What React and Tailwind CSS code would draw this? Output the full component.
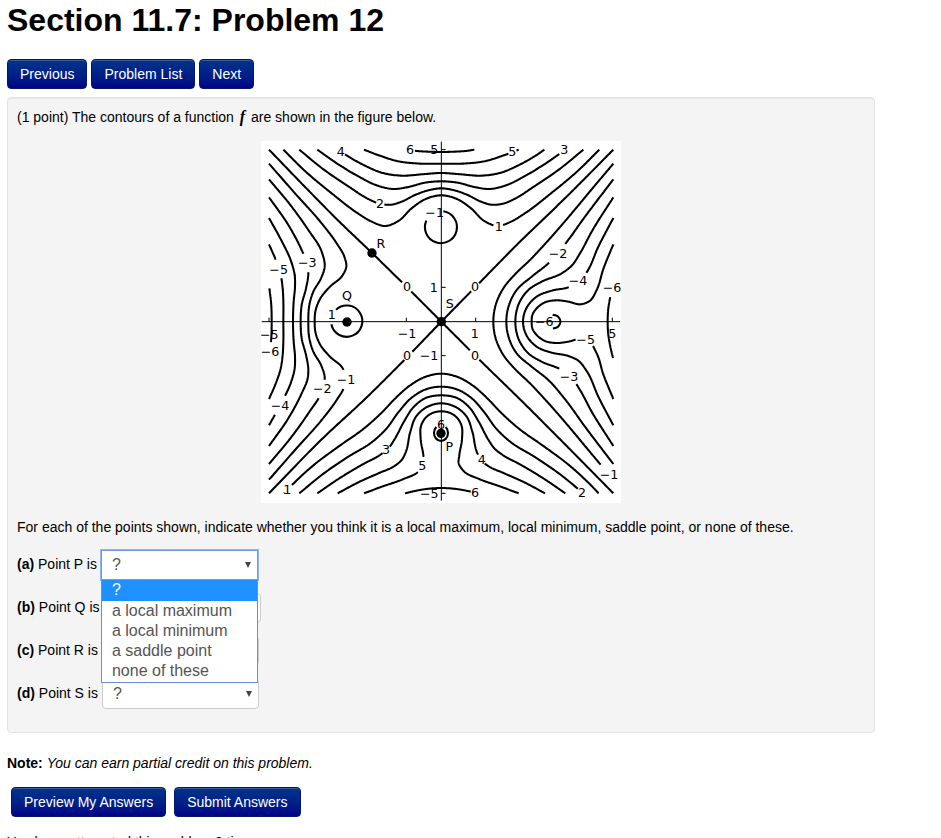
import React from 'react';

const AXIS_X = 559;
const AXIS_Y = 560;

// Each contour lists control points up to the axis it is symmetric about,
// the mirror direction, and the circular gaps left open for its label.
const contours = [
  // top
  { m: 'x', p: [[85,44],[150,108],[230,175],[310,236],[350,260],[391,273],[430,258],[470,220],[510,193],[559,181]], g: [[730,273,14]] },
  { m: 'x', p: [[133,44],[200,99],[280,154],[340,192],[370,205],[410,209],[440,200],[480,180],[520,166],[559,160]], g: [[375,207,12]] },
  { m: 'x', p: [[187,44],[250,88],[310,124],[360,149],[415,162],[460,156],[510,143],[559,139]], g: [[928,45,17]] },
  { m: 'x', p: [[250,44],[270,58],[330,92],[380,113],[440,122],[500,118],[559,114]], g: [[257,50,15]] },
  { m: 'x', p: [[327,44],[380,64],[430,79],[480,85],[559,86]], g: [[772,50,11]] },
  { m: 'x', p: [[460,44],[478,47],[520,50],[559,51]], g: [[465,45,14]] },
  // left
  { m: 'y', p: [[42,86],[120,175],[200,265],[245,325],[268,365],[274,395],[262,422],[225,455],[195,492],[181,530],[179,560]], g: [[270,733,28]] },
  { m: 'y', p: [[42,133],[110,215],[160,285],[200,350],[209,395],[198,430],[175,470],[163,510],[160,560]], g: [[200,762,29]] },
  { m: 'y', p: [[42,187],[100,270],[140,345],[158,390],[160,415],[153,460],[140,510],[137,560]], g: [[155,384,28]] },
  { m: 'y', p: [[42,249],[80,318],[108,378],[119,420],[120,455],[116,500],[114,560]], g: [[76,811,30]] },
  { m: 'y', p: [[42,328],[62,374],[76,415],[83,460],[85,500],[85,560]], g: [[70,402,29]] },
  { m: 'y', p: [[43,460],[48,500],[50,560]], g: [[45,651,28]] },
  // right
  { m: 'y', p: [[1075,86],[1010,163],[940,247],[870,327],[825,375],[780,418],[745,460],[722,510],[715,560]], g: [[1060,1020,37]] },
  { m: 'y', p: [[1075,133],[990,245],[928,330],[880,385],[830,425],[785,465],[762,510],[754,560]], g: [[908,357,34]] },
  { m: 'y', p: [[1075,187],[1010,290],[975,355],[950,392],[920,415],[860,440],[820,465],[792,505],[781,560]], g: [[940,723,33]] },
  { m: 'y', p: [[1075,249],[1030,335],[995,412],[970,443],[940,457],[890,467],[845,485],[815,518],[804,560]], g: [[970,438,34]] },
  { m: 'y', p: [[1075,328],[1045,402],[1025,465],[1005,497],[977,508],[940,500],[905,496],[870,502],[845,520],[832,540],[830,560]], g: [[990,618,28]] },
  { m: 'y', p: [[1074,451],[1066,485],[1060,520],[1058,560]], g: [[1070,459,27]] },
  // bottom
  { m: 'x', p: [[87,1075],[108,1053],[180,987],[250,935],[330,878],[380,833],[420,791],[460,755],[510,726],[559,716]], g: [[99,1062,15]] },
  { m: 'x', p: [[133,1075],[200,1020],[280,965],[350,922],[395,880],[430,832],[470,788],[510,764],[559,755]], g: [[981,1073,17]] },
  { m: 'x', p: [[187,1075],[250,1032],[325,987],[375,960],[400,940],[418,914],[448,858],[475,817],[510,790],[559,781]], g: [[393,945,14]] },
  { m: 'x', p: [[248,1075],[310,1042],[370,1015],[420,992],[440,975],[452,952],[466,890],[483,845],[514,817],[559,805]], g: [[680,972,16]] },
  { m: 'x', p: [[327,1075],[378,1056],[448,1031],[490,1010],[507,984],[505,960],[497,912],[499,870],[515,845],[535,833],[559,829]], g: [[500,990,24]] },
  { m: 'x', p: [[450,1075],[500,1064],[559,1059]], g: [[660,1074,13]] },
  // zero level and the closed rings
  { p: [[42,44],[160,166],[250,257],[351,354],[445,446],[559,560],[673,674],[790,788],[940,938],[1075,1075]], g: [[456,456,16],[660,661,16]] },
  { p: [[1075,44],[940,180],[790,325],[672,445],[559,560],[443,680],[330,792],[200,913],[42,1075]], g: [[660,456,16],[456,661,16]] },
  { p: [[893,539],[908,544],[916,560],[909,575],[894,581]], g: [] },
];

const labels = [
  ['5',538,45],['1',536,457],['−1',522,662],['−5',523,1075],
  ['−5',43,598],['−1',456,597],['1',659,597],['5',1072,597],
  ['4',257,50],['6',465,45],['5',772,50],['3',928,45],['2',375,207],['1',731,275],['−1',539,233],
  ['−5',71,405],['−3',157,384],['−6',45,651],['−4',75,813],['−2',202,762],['−1',273,735],['1',230,539],
  ['−2',909,357],['−4',969,438],['−6',1071,459],['−6',868,560],['−5',992,615],['−3',942,726],['−1',1062,1020],
  ['1',97,1063],['3',393,945],['5',502,993],['6',558,868],['4',680,973],['2',981,1073],['6',660,1074],
  ['0',456,456],['0',660,456],['0',456,662],['0',660,662],
  ['R',378,327],['Q',276,483],['S',584,507],['P',583,936],
];

// Hermite spline whose tangents are weighted by chord length, so unevenly
// spaced control points still give a smooth line.
function spline(points) {
  const n = points.length;
  const dist = (a, b) => Math.hypot(b[0] - a[0], b[1] - a[1]);
  const tangents = points.map((p, i) => {
    const a = points[Math.max(i - 1, 0)];
    const b = points[Math.min(i + 1, n - 1)];
    const before = dist(a, p);
    const after = dist(p, b);
    return [0, 1].map((k) => {
      if (!before) return (b[k] - p[k]) / after;
      if (!after) return (p[k] - a[k]) / before;
      return (((p[k] - a[k]) / before) * after + ((b[k] - p[k]) / after) * before) / (before + after);
    });
  });
  const out = [];
  for (let i = 0; i < n - 1; i++) {
    const h = dist(points[i], points[i + 1]);
    for (let s = 0; s < 24; s++) {
      const t = s / 24;
      const t2 = t * t;
      const t3 = t2 * t;
      out.push(
        [0, 1].map(
          (k) =>
            (2 * t3 - 3 * t2 + 1) * points[i][k] +
            (t3 - 2 * t2 + t) * h * tangents[i][k] +
            (3 * t2 - 2 * t3) * points[i + 1][k] +
            (t3 - t2) * h * tangents[i + 1][k]
        )
      );
    }
  }
  out.push(points[n - 1]);
  return out;
}

function contourPath({ p, m, g }) {
  const rest = p.slice(0, -1).reverse();
  let all = p;
  if (m === 'x') all = p.concat(rest.map(([x, y]) => [2 * AXIS_X - x, y]));
  if (m === 'y') all = p.concat(rest.map(([x, y]) => [x, 2 * AXIS_Y - y]));
  let open = false;
  return spline(all)
    .map(([x, y]) => {
      if (g.some(([gx, gy, r]) => Math.hypot(x - gx, y - gy) < r)) {
        open = false;
        return '';
      }
      const cmd = open ? 'L' : 'M';
      open = true;
      return `${cmd}${x.toFixed(1)} ${y.toFixed(1)}`;
    })
    .join('');
}

function ContourPlot() {
  return (
    <svg viewBox="18 18 1080 1086" className="h-[362px] w-[360px] bg-white" role="img" aria-label="Contour plot of f">
      <g fill="none" stroke="#000" strokeWidth="6.2">
        {contours.map((c, i) => (
          <path key={i} d={contourPath(c)} strokeLinejoin="round" />
        ))}
        <path d="M514 257A48 48 0 1 0 565 229" />
        <path d="M243 524A47 47 0 1 1 229 568" />
        <path d="M544 876A21 24 0 1 0 572 876" />
      </g>
      <path
        d="M20 560H1095M559 20V1097M42 560v-12M454 560v-12M662 560v-12M1072 560v-12M559 44h13M559 457h13M559 662h13M559 1075h13"
        stroke="#000"
        strokeWidth="3"
        fill="none"
      />
      <circle cx="351" cy="354" r="14" />
      <circle cx="276" cy="561" r="14" />
      <circle cx="559" cy="560" r="14" />
      <circle cx="558" cy="895" r="14" />
      <g fontSize="38" textAnchor="middle" className="font-['DejaVu_Sans',sans-serif]">
        {labels.map(([t, x, y], i) => (
          <text key={i} x={x} y={y + 13}>{t}</text>
        ))}
      </g>
    </svg>
  );
}

function BlueButton({ children }) {
  return (
    <button
      type="button"
      className="h-[30px] rounded border border-[#001a66] bg-linear-to-b from-[#003388] to-[#000088] px-3 text-sm leading-5 text-white shadow-[inset_0_1px_0_rgba(255,255,255,0.2)]"
    >
      {children}
    </button>
  );
}

const choices = ['?', 'a local maximum', 'a local minimum', 'a saddle point', 'none of these'];

function AnswerRow({ letter, point, open }) {
  const id = `answer-${letter}`;
  return (
    <div className="flex h-[30px] items-center">
      <label htmlFor={id} className="mr-1 pb-0.5">
        <b>({letter})</b> Point {point} is
      </label>
      <div className="relative">
        <select
          id={id}
          defaultValue="?"
          className={
            'block h-[30px] w-[157px] appearance-none border bg-white px-[10px] text-base leading-5 text-[#555] outline-none ' +
            (open ? 'border-[#6f9ae0] shadow-[0_0_0_1px_#8fb4f0]' : 'rounded border-[#ccc]')
          }
        >
          {choices.map((c) => (
            <option key={c}>{c}</option>
          ))}
        </select>
        <svg viewBox="0 0 6 6" className="pointer-events-none absolute top-3 right-[7px] size-[6px]" aria-hidden="true">
          <path d="M0 0h6L3 6z" fill="#444" />
        </svg>
        {open && (
          <ul
            role="listbox"
            className="absolute top-full left-0 z-10 w-full border border-t-0 border-[#6b8fd0] bg-white pb-px text-base leading-5 text-[#555]"
          >
            {choices.map((c, i) => (
              <li
                key={c}
                role="option"
                aria-selected={i === 0}
                className={i === 0 ? 'h-[21px] bg-[#1e90ff] px-[10px] leading-[19px] text-white' : 'px-[10px] pb-px leading-[19px]'}
              >
                {c}
              </li>
            ))}
          </ul>
        )}
      </div>
    </div>
  );
}

export default function App() {
  return (
    <main className="h-screen overflow-hidden bg-white pr-[66px] pl-[7px] font-['Liberation_Sans',Arial,sans-serif] text-sm leading-5 text-black">
      <h1 className="text-[32px] leading-10 font-bold">Section 11.7: Problem 12</h1>
      <nav className="mt-[19px] flex gap-1">
        <BlueButton>Previous</BlueButton>
        <BlueButton>Problem List</BlueButton>
        <BlueButton>Next</BlueButton>
      </nav>
      <section className="mt-2 rounded border border-[#e3e3e3] bg-[#f4f4f4] px-[9px] pt-[9px] pb-[23px] shadow-[inset_0_1px_1px_rgba(0,0,0,0.05)]">
        <p>
          (1 point) The contours of a function{' '}
          <i className="mx-0.5 font-['Liberation_Serif',serif] text-base leading-5 font-bold">f</i>{' '}
          are shown in the figure below.
        </p>
        <div className="mt-[14px] flex justify-center">
          <ContourPlot />
        </div>
        <p className="mt-[14px]">
          For each of the points shown, indicate whether you think it is a local maximum, local minimum, saddle point, or none of these.
        </p>
        <div className="mt-[13px] flex flex-col gap-[13px]">
          <AnswerRow letter="a" point="P" open />
          <AnswerRow letter="b" point="Q" />
          <AnswerRow letter="c" point="R" />
          <AnswerRow letter="d" point="S" />
        </div>
      </section>
      <p className="mt-5">
        <b>Note:</b> <i>You can earn partial credit on this problem.</i>
      </p>
      <div className="mt-[14px] flex gap-2 pl-1">
        <BlueButton>Preview My Answers</BlueButton>
        <BlueButton>Submit Answers</BlueButton>
      </div>
      <p className="mt-[15px]">You have attempted this problem 0 times.</p>
    </main>
  );
}
